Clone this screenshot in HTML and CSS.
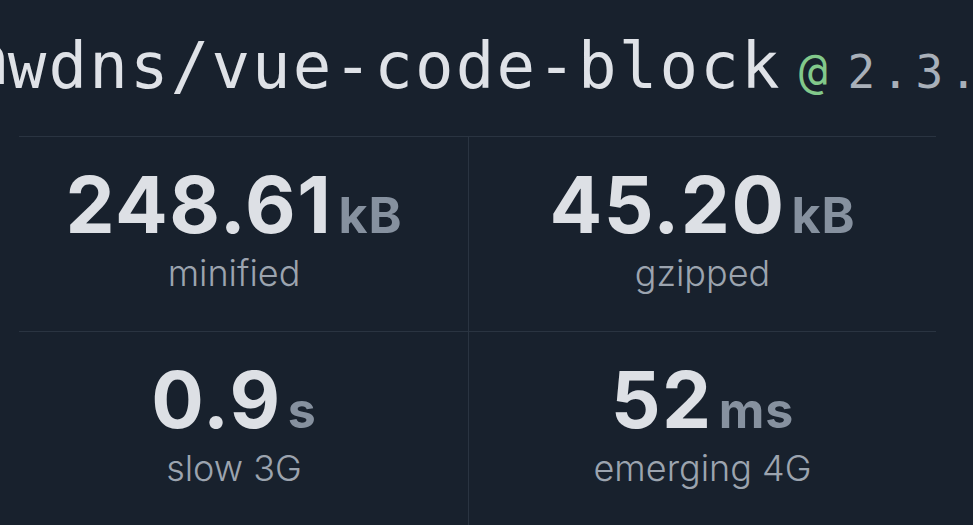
FILE: index.html
```html
<!DOCTYPE html>
<html lang="en">
<head>
<meta charset="utf-8">
<title>@wdns/vue-code-block</title>
<link rel="stylesheet" href="styles.css">
</head>
<body>
<div class="card">
  <h1 class="title"><span class="name">@wdns/vue-code-block</span><span class="at">@</span><span class="ver">2.3.</span></h1>
  <div class="stats">
    <div class="row">
      <div class="stat">
        <div class="value">248.61<span class="unit">kB</span></div>
        <div class="label">minified</div>
      </div>
      <div class="stat">
        <div class="value">45.20<span class="unit">kB</span></div>
        <div class="label">gzipped</div>
      </div>
    </div>
    <div class="row">
      <div class="stat">
        <div class="value">0.9<span class="unit">s</span></div>
        <div class="label">slow 3G</div>
      </div>
      <div class="stat">
        <div class="value">52<span class="unit">ms</span></div>
        <div class="label">emerging 4G</div>
      </div>
    </div>
  </div>
</div>
</body>
</html>
```
FILE: styles.css
```css
html, body {
  margin: 0;
  padding: 0;
  background: #18212d;
  overflow: hidden;
}
.card {
  width: 973px;
  height: 525px;
  overflow: hidden;
}
.title {
  margin: 36px 0 0 -33px;
  font-family: "DejaVu Sans Mono", monospace;
  font-weight: normal;
  font-size: 64px;
  line-height: 60px;
  height: 60px;
  white-space: nowrap;
  color: #dfe2e7;
}
.name {
  letter-spacing: 2.2px;
}
.at {
  font-size: 48px;
  line-height: 40px;
  color: #82c98b;
  margin-left: 17px;
}
.ver {
  font-size: 46px;
  line-height: 40px;
  color: #a9b0b9;
  letter-spacing: 6.3px;
  margin-left: 20px;
}
.stats {
  margin-top: 40px;
  width: 936px;
}
.row {
  display: grid;
  grid-template-columns: 468px 468px;
  background: linear-gradient(#2a3441, #2a3441) no-repeat 19px 0 / 917px 1px;
  padding-top: 1px;
}
.stat {
  display: flex;
  flex-direction: column;
  align-items: center;
  padding: 30px 0 40px;
}
.row:last-child .stat {
  padding-bottom: 80px;
}
.stat + .stat {
  border-left: 1px solid #2a3441;
}
.value {
  font-family: Inter, "Liberation Sans", sans-serif;
  font-weight: 700;
  font-size: 78px;
  line-height: 76px;
  color: #dde0e5;
  letter-spacing: 1.5px;
}
.unit {
  font-size: 50px;
  color: #86919f;
  margin-left: 6px;
  letter-spacing: 1px;
}
.label {
  margin-top: 2px;
  font-family: Inter, "Liberation Sans", sans-serif;
  font-weight: 300;
  font-size: 36px;
  line-height: 36px;
  color: #9ca4af;
}
```
